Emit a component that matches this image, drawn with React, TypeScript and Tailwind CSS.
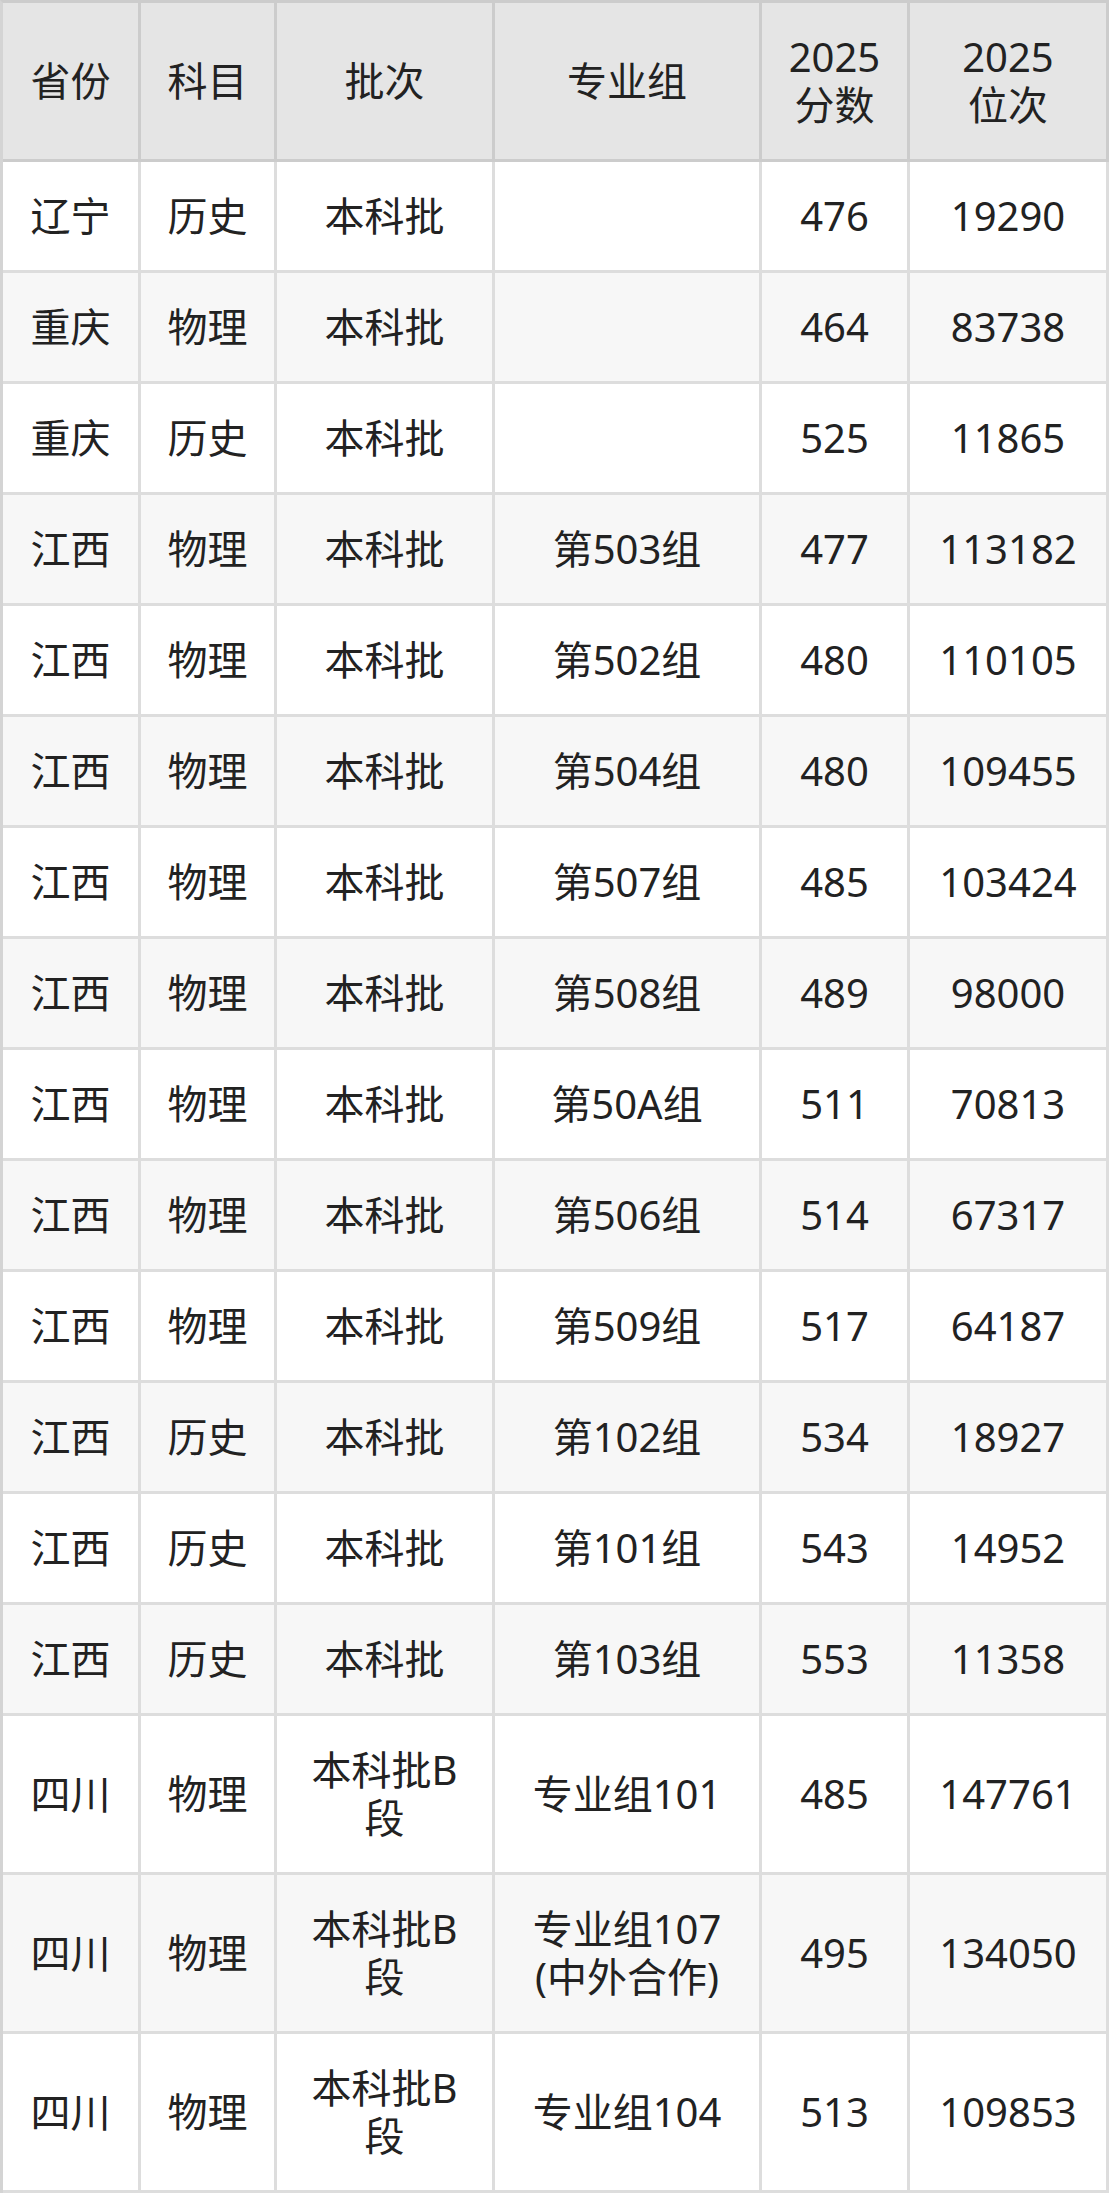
import React from "react";

type Row = {
  province: string;
  subject: string;
  batch: string;
  group: string;
  score: string;
  rank: string;
};

// "\n" marks the line break used in the source table
const ROWS: Row[] = [
  { province: "辽宁", subject: "历史", batch: "本科批", group: "", score: "476", rank: "19290" },
  { province: "重庆", subject: "物理", batch: "本科批", group: "", score: "464", rank: "83738" },
  { province: "重庆", subject: "历史", batch: "本科批", group: "", score: "525", rank: "11865" },
  { province: "江西", subject: "物理", batch: "本科批", group: "第503组", score: "477", rank: "113182" },
  { province: "江西", subject: "物理", batch: "本科批", group: "第502组", score: "480", rank: "110105" },
  { province: "江西", subject: "物理", batch: "本科批", group: "第504组", score: "480", rank: "109455" },
  { province: "江西", subject: "物理", batch: "本科批", group: "第507组", score: "485", rank: "103424" },
  { province: "江西", subject: "物理", batch: "本科批", group: "第508组", score: "489", rank: "98000" },
  { province: "江西", subject: "物理", batch: "本科批", group: "第50A组", score: "511", rank: "70813" },
  { province: "江西", subject: "物理", batch: "本科批", group: "第506组", score: "514", rank: "67317" },
  { province: "江西", subject: "物理", batch: "本科批", group: "第509组", score: "517", rank: "64187" },
  { province: "江西", subject: "历史", batch: "本科批", group: "第102组", score: "534", rank: "18927" },
  { province: "江西", subject: "历史", batch: "本科批", group: "第101组", score: "543", rank: "14952" },
  { province: "江西", subject: "历史", batch: "本科批", group: "第103组", score: "553", rank: "11358" },
  { province: "四川", subject: "物理", batch: "本科批B\n段", group: "专业组101", score: "485", rank: "147761" },
  { province: "四川", subject: "物理", batch: "本科批B\n段", group: "专业组107\n(中外合作)", score: "495", rank: "134050" },
  { province: "四川", subject: "物理", batch: "本科批B\n段", group: "专业组104", score: "513", rank: "109853" },
];

const th =
  "border-r-[3px] border-b-[3px] border-[#cccccc] bg-[#e5e5e5] px-5 py-[30px] text-center font-normal align-middle";
const td =
  "border-r-[3px] border-b-[3px] border-[#dddddd] px-4 py-[30px] text-center align-middle whitespace-pre-line";

export default function App() {
  return (
    <div
      className="w-[1110px] bg-white text-[40px] leading-[48px] text-[#222222]"
      style={{ fontFamily: '"Noto Sans", "Noto Sans CJK SC", sans-serif' }}
    >
      <table className="w-[1109px] table-fixed border-separate border-spacing-0 border-l-[3px] border-t-[3px] border-l-[#d4d4d4] border-t-[#cccccc]">
        <colgroup>
          <col className="w-[138px]" />
          <col className="w-[136px]" />
          <col className="w-[218px]" />
          <col className="w-[267px]" />
          <col className="w-[148px]" />
          <col className="w-[199px]" />
        </colgroup>
        <thead>
          <tr>
            <th className={th}>省份</th>
            <th className={th}>科目</th>
            <th className={th}>批次</th>
            <th className={th}>专业组</th>
            <th className={th}>
              2025
              <br />
              分数
            </th>
            <th className={th}>
              2025
              <br />
              位次
            </th>
          </tr>
        </thead>
        <tbody>
          {ROWS.map((row, i) => (
            <tr key={i} className={i % 2 === 1 ? "bg-[#f7f7f7]" : "bg-white"}>
              <td className={td}>{row.province}</td>
              <td className={td}>{row.subject}</td>
              <td className={td}>{row.batch}</td>
              <td className={td}>{row.group}</td>
              <td className={td}>{row.score}</td>
              <td className={td}>{row.rank}</td>
            </tr>
          ))}
        </tbody>
      </table>
    </div>
  );
}
